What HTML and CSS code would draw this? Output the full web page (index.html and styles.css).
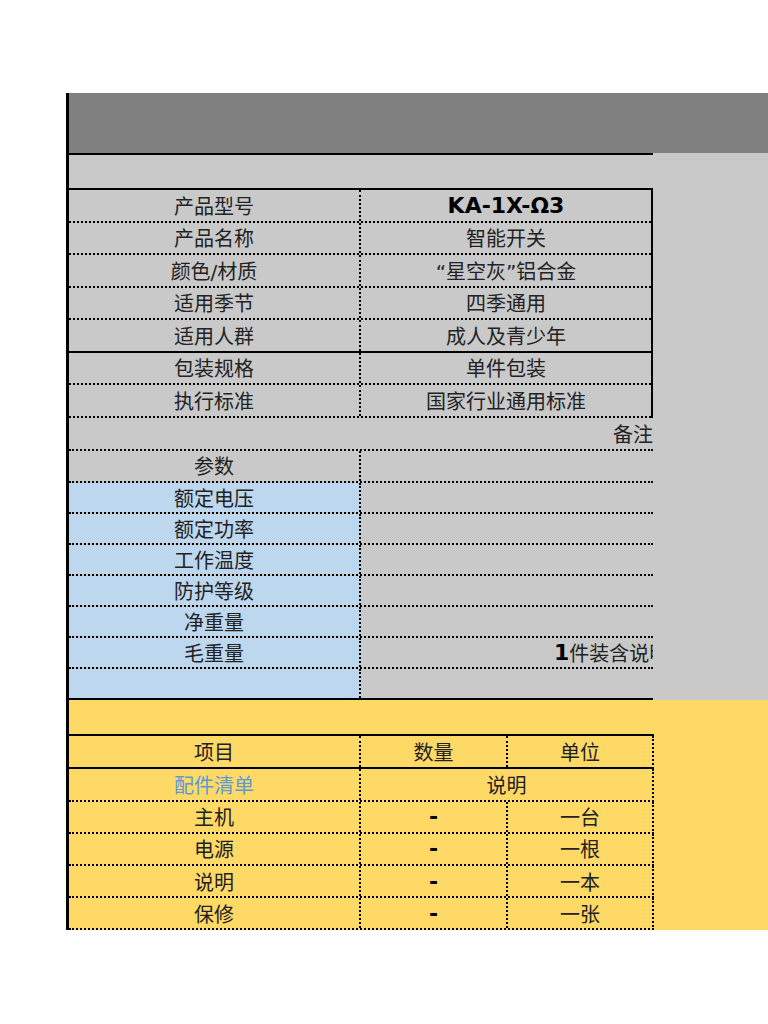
FILE: index.html
```html
<!DOCTYPE html>
<html lang="zh">
<head>
<meta charset="utf-8">
<title>产品信息表</title>
<link rel="stylesheet" href="styles.css">
</head>
<body>
<div class="sheet">
  <div class="band"></div>

  <section class="zone gray">
    <div class="tbl topline">
      <div class="blank"></div>
      <div class="box">
        <div class="row"><div class="cell first">产品型号</div><div class="cell"><span class="lat">KA-1X-Ω3</span></div></div>
        <div class="row"><div class="cell first">产品名称</div><div class="cell">智能开关</div></div>
        <div class="row"><div class="cell first">颜色/材质</div><div class="cell">“星空灰”铝合金</div></div>
        <div class="row"><div class="cell first">适用季节</div><div class="cell">四季通用</div></div>
        <div class="row thick"><div class="cell first">适用人群</div><div class="cell">成人及青少年</div></div>
        <div class="row"><div class="cell first">包装规格</div><div class="cell">单件包装</div></div>
        <div class="row"><div class="cell first">执行标准</div><div class="cell">国家行业通用标准</div></div>
      </div>
      <div class="row single"><div class="cell end">备注</div></div>
      <div class="row short"><div class="cell first">参数</div><div class="cell"></div></div>
      <div class="row blue"><div class="cell first">额定电压</div><div class="cell"></div></div>
      <div class="row blue"><div class="cell first">额定功率</div><div class="cell"></div></div>
      <div class="row blue"><div class="cell first">工作温度</div><div class="cell"></div></div>
      <div class="row blue"><div class="cell first">防护等级</div><div class="cell"></div></div>
      <div class="row blue"><div class="cell first">净重量</div><div class="cell"></div></div>
      <div class="row blue"><div class="cell first">毛重量</div><div class="cell clip"><span class="lat">1</span>件装含说明书及配件</div></div>
      <div class="row blue last"><div class="cell first"></div><div class="cell"></div></div>
    </div>
  </section>

  <section class="zone yellow">
    <div class="tbl ytbl">
      <div class="yblank"></div>
      <div class="yrow head"><div class="cell first">项目</div><div class="cell mid">数量</div><div class="cell">单位</div></div>
      <div class="yrow"><div class="cell first accent">配件清单</div><div class="cell wide">说明</div></div>
      <div class="yrow"><div class="cell first">主机</div><div class="cell mid"><span class="lat">-</span></div><div class="cell">一台</div></div>
      <div class="yrow"><div class="cell first">电源</div><div class="cell mid"><span class="lat">-</span></div><div class="cell">一根</div></div>
      <div class="yrow"><div class="cell first">说明</div><div class="cell mid"><span class="lat">-</span></div><div class="cell">一本</div></div>
      <div class="yrow"><div class="cell first">保修</div><div class="cell mid"><span class="lat">-</span></div><div class="cell">一张</div></div>
    </div>
  </section>
</div>
</body>
</html>
```

FILE: styles.css
```css
html, body {
  margin: 0;
  background: #ffffff;
}

body {
  font-family: "DejaVu Sans", "Noto Sans CJK SC", sans-serif;
}

.sheet {
  margin: 93px 0 0 66px;
  border-left: 3px solid #000;
}

.band {
  height: 60px;
  background: #808080;
}

.gray {
  background: #c9c9c9;
}

.yellow {
  background: #ffd966;
}

.tbl {
  width: 584px;
}

.topline {
  border-top: 2px solid #000;
}

.blank {
  height: 33px;
}

.box {
  border-top: 2px solid #000;
  border-right: 2px solid #000;
}

.row {
  display: grid;
  grid-template-columns: 292px 1fr;
  height: 32.5px;
  box-sizing: border-box;
  border-bottom: 2px dotted #000;
}

.row.thick {
  border-bottom: 2px solid #000;
}

.row.single {
  grid-template-columns: 1fr;
  height: 33px;
}

.row.short {
  height: 32px;
}

.row.blue {
  height: 31.15px;
}

.row.blue .first {
  background: #bdd7ee;
}

.row.last {
  border-bottom: 2px solid #000;
}

.cell {
  display: flex;
  align-items: center;
  justify-content: center;
  overflow: hidden;
  white-space: nowrap;
  font-size: 20px;
  color: #222222;
}

.cell.first {
  border-right: 2px dotted #000;
}

.cell.end {
  justify-content: flex-end;
}

.cell.clip {
  justify-content: flex-start;
  padding-left: 193px;
}

.lat {
  font-size: 22px;
  font-weight: 700;
  color: #000;
}

.ytbl {
  width: 585px;
}

.yblank {
  height: 34px;
  border-bottom: 2px solid #000;
}

.yrow {
  display: grid;
  grid-template-columns: 292px 147px 1fr;
  height: 32.2px;
  box-sizing: border-box;
  border-bottom: 2px dotted #000;
  border-right: 2px dotted #000;
}

.yrow.head {
  height: 33px;
  border-bottom: 2px solid #000;
}

.cell.mid {
  border-right: 2px dotted #000;
}

.cell.wide {
  grid-column: 2 / 4;
}

.cell.accent {
  color: #5b9bd5;
}
```
